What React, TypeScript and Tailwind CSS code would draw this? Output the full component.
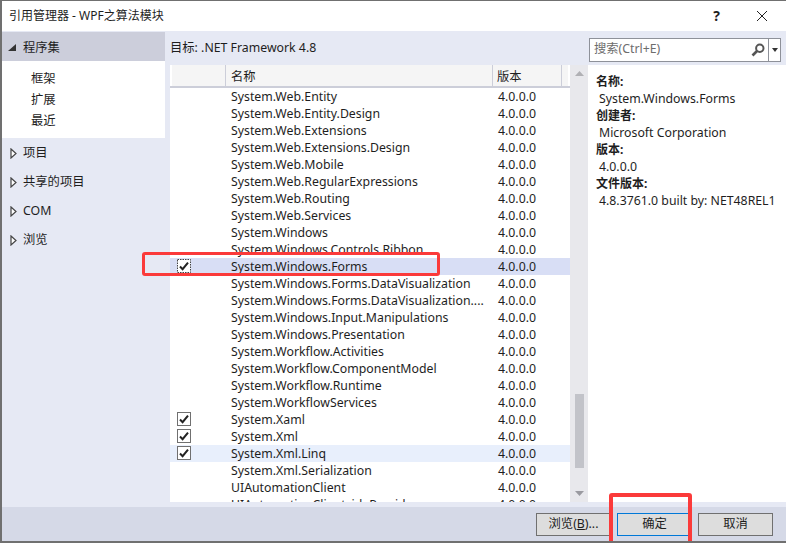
const rows = [
  { name: "System.Web.Entity" },
  { name: "System.Web.Entity.Design" },
  { name: "System.Web.Extensions" },
  { name: "System.Web.Extensions.Design" },
  { name: "System.Web.Mobile" },
  { name: "System.Web.RegularExpressions" },
  { name: "System.Web.Routing" },
  { name: "System.Web.Services" },
  { name: "System.Windows" },
  { name: "System.Windows.Controls.Ribbon" },
  { name: "System.Windows.Forms", checked: true, selected: true },
  { name: "System.Windows.Forms.DataVisualization" },
  { name: "System.Windows.Forms.DataVisualization...." },
  { name: "System.Windows.Input.Manipulations" },
  { name: "System.Windows.Presentation" },
  { name: "System.Workflow.Activities" },
  { name: "System.Workflow.ComponentModel" },
  { name: "System.Workflow.Runtime" },
  { name: "System.WorkflowServices" },
  { name: "System.Xaml", checked: true },
  { name: "System.Xml", checked: true },
  { name: "System.Xml.Linq", checked: true, hover: true },
  { name: "System.Xml.Serialization" },
  { name: "UIAutomationClient" },
  { name: "UIAutomationClientsideProviders" },
];

const details = [
  ["名称:", "System.Windows.Forms"],
  ["创建者:", "Microsoft Corporation"],
  ["版本:", "4.0.0.0"],
  ["文件版本:", "4.8.3761.0 built by: NET48REL1"],
];

const Checkbox = ({ dotted }: { dotted?: boolean }) => (
  <svg width="14" height="14" viewBox="0 0 14 14" className="block -mt-[1px]">
    <rect x="0.5" y="0.5" width="13" height="13" fill="#fff" stroke={dotted ? "#444" : "#707070"} strokeDasharray={dotted ? "1.5 1" : undefined} />
    <path d="M3 7.5 L5.6 10.2 L11 3.6" fill="none" stroke="#222" strokeWidth="2" />
  </svg>
);

const SideItem = ({ label }: { label: string }) => (
  <div className="flex h-[29px] items-center pt-[2px]">
    <svg width="7" height="11" viewBox="0 0 7 11" className="ml-[8px] mr-[6px]">
      <path d="M1 1 L6 5.5 L1 10 Z" fill="#fff" stroke="#444" strokeWidth="1.2" />
    </svg>
    <span>{label}</span>
  </div>
);

const Btn = ({ label, primary }: { label: React.ReactNode; primary?: boolean }) => (
  <div className={`flex h-[23px] w-[75px] items-center justify-center bg-[#dddddd] border ${primary ? "border-[#0078d7]" : "border-[#707070]"}`}>
    {label}
  </div>
);

export default function App() {
  return (
    <div
      className="relative flex h-[543px] w-[786px] flex-col overflow-hidden border-t border-l-2 border-b-2 border-[#707070] bg-white text-[12.3px] text-[#1e1e1e]"
      style={{ fontFamily: '"Noto Sans", "Noto Sans CJK SC", sans-serif' }}
    >
      {/* title bar */}
      <div className="flex h-[30px] shrink-0 items-center bg-white pl-[7px]">
        <span className="text-[12px] leading-none">引用管理器 - WPF之算法模块</span>
        <span className="ml-auto mr-[36px] text-[14px] font-bold leading-none">?</span>
        <svg width="12" height="12" viewBox="0 0 12 12" className="mr-[18px]">
          <path d="M1 1 L11 11 M11 1 L1 11" stroke="#222" strokeWidth="1" />
        </svg>
      </div>

      {/* body */}
      <div className="flex min-h-0 flex-1 bg-[#e6e9f4] pb-[5px]">
        {/* left nav */}
        <div className="w-[163px] shrink-0 pt-px">
          <div className="flex h-[29px] items-center bg-[#cccedb] pt-[3px]">
            <svg width="8" height="7" viewBox="0 0 8 7" className="ml-[6px] mr-[7px] -mt-[1px]">
              <path d="M8 0 V7 H0 Z" fill="#333" />
            </svg>
            <span>程序集</span>
          </div>
          <div className="flex h-[77px] flex-col justify-center gap-[4px] bg-white pl-[29px] leading-[17px]">
            <div>框架</div>
            <div>扩展</div>
            <div>最近</div>
          </div>
          <div>
            <SideItem label="项目" />
            <SideItem label="共享的项目" />
            <SideItem label="COM" />
            <SideItem label="浏览" />
          </div>
        </div>

        <div className="ml-[5px] flex min-w-0 flex-1 flex-col">
          {/* target + search */}
          <div className="flex h-[34px] shrink-0 items-center">
            <span>目标: .NET Framework 4.8</span>
            <div className="ml-auto mr-[5px] mt-[3px] flex h-[24px] w-[192px] items-center border border-[#8e9199] bg-white pl-[4px] text-[#6d6d6d]">
              <span>搜索(Ctrl+E)</span>
              <svg width="14" height="14" viewBox="0 0 14 14" className="ml-auto mr-[3px]">
                <circle cx="8.8" cy="5.2" r="3.7" fill="none" stroke="#555" strokeWidth="2" />
                <path d="M6 8 L1.5 12.5" stroke="#555" strokeWidth="2.6" />
              </svg>
              <div className="flex h-full w-[12px] items-center justify-center border-l border-[#8e9199]">
                <svg width="6" height="4" viewBox="0 0 6 4"><path d="M0 0 H6 L3 4 Z" fill="#333" /></svg>
              </div>
            </div>
          </div>

          {/* list, scrollbar, details */}
          <div className="flex min-h-0 flex-1">
            <div className="flex w-[400px] shrink-0 flex-col overflow-hidden bg-white">
              <div className="flex h-[23px] shrink-0 border-b-2 border-[#ccced9] bg-white">
                <div className="ml-[2px] w-[54px] border-r border-[#ccced9] bg-[#f5f5f5]" />
                <div className="flex w-[267px] items-center border-r border-[#ccced9] bg-[#f5f5f5] pl-[5px] pt-[3px]">名称</div>
                <div className="flex w-[69px] items-center border-r border-[#ccced9] bg-[#f5f5f5] pl-[4px] pt-[3px]">版本</div>
                <div className="w-[6px] bg-[#f5f5f5]" />
              </div>
              {rows.map((r) => (
                <div
                  key={r.name}
                  className={`flex h-[17px] shrink-0 items-center leading-[17px] ${r.selected ? "bg-[#d8def5]" : r.hover ? "bg-[#e8effc]" : ""}`}
                >
                  <div className="flex w-[61px] shrink-0 pl-[7px]">{r.checked && <Checkbox dotted={r.selected} />}</div>
                  <div className="w-[267px] shrink-0 whitespace-nowrap">{r.name}</div>
                  <div>4.0.0.0</div>
                </div>
              ))}
            </div>

            {/* scrollbar */}
            <div className="flex w-[18px] shrink-0 flex-col items-center bg-[#e8e8ec]">
              <svg width="9" height="5" viewBox="0 0 9 5" className="mt-[6px]"><path d="M0 5 L4.5 0 L9 5 Z" fill="#b0b0b4" /></svg>
              <div className="mt-auto h-[74px] w-[9px] bg-[#c2c3c9]" />
              <svg width="9" height="5" viewBox="0 0 9 5" className="mb-[6px] mt-[23px]"><path d="M0 0 H9 L4.5 5 Z" fill="#9a9aa0" /></svg>
            </div>

            {/* details */}
            <div className="flex-1 bg-white pl-[8px] pt-[8px] leading-[17px] whitespace-nowrap">
              {details.map(([k, v]) => (
                <div key={k}>
                  <div className="font-bold text-[12px]">{k}</div>
                  <div className="pl-[3px]">{v}</div>
                </div>
              ))}
            </div>
          </div>
        </div>
      </div>

      {/* footer */}
      <div className="flex h-[34px] shrink-0 items-start justify-end gap-[6px] bg-[#d5d9e7] pr-[13px] pt-[6px]">
        <Btn label={<span>浏览(<span className="underline">B</span>)...</span>} />
        <Btn label="确定" primary />
        <Btn label="取消" />
      </div>

      {/* red annotations */}
      <div className="absolute left-[140px] top-[251px] h-[24px] w-[298px] rounded-[3px] border-[3px] border-[#fb3a3a]" />
      <div className="absolute left-[607px] top-[492px] h-[70px] w-[83px] rounded-[3px] border-4 border-[#fb3a3a]" />
    </div>
  );
}
